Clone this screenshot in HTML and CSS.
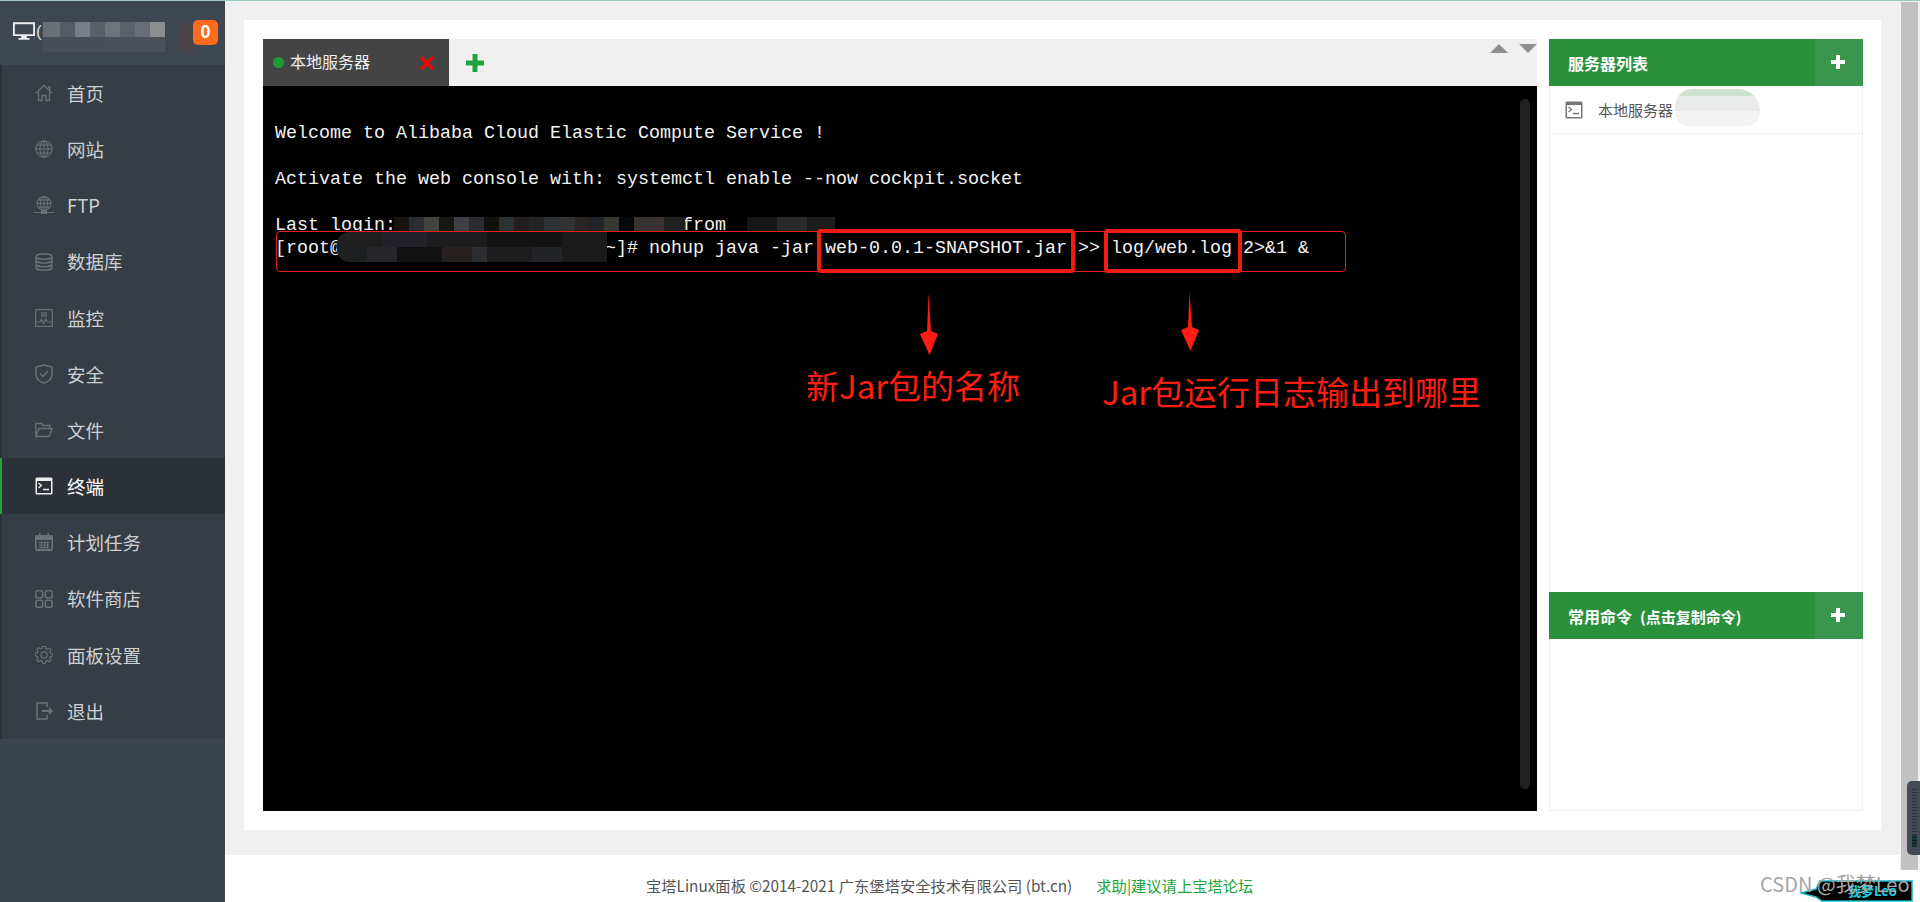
FILE: index.html
```html
<!DOCTYPE html>
<html lang="zh-CN">
<head>
<meta charset="utf-8">
<title>宝塔Linux面板 - 终端</title>
<link rel="stylesheet" href="styles.css">
</head>
<body>
<div class="topline"></div>
<div class="app">
  <aside class="sidebar">
    <div class="brand">
      <svg class="brand-icon" viewBox="0 0 24 20"><path d="M1 1h22v13H1z" fill="none" stroke="#eee" stroke-width="2"/><path d="M9 15h6v2h3v2H6v-2h3z" fill="#eee"/></svg>
      <span class="brand-paren">(</span>
      <div class="brand-mosaic"></div>
      <div class="brand-smear"></div>
      <span class="badge">0</span>
    </div>
    <nav class="menu">
      <a class="item"><svg class="ico" viewBox="0 0 18 18"><path d="M1 9 9 1.500 17 9M3.500 8v8.500h3.500v-5h4v5h3.500V8M13 3h2v3" fill="none" stroke="currentColor" stroke-width="1.300"/></svg><span>首页</span></a>
      <a class="item"><svg class="ico" viewBox="0 0 18 18"><g fill="none" stroke="currentColor" stroke-width="1.100"><circle cx="9" cy="9" r="8.200"/><ellipse cx="9" cy="9" rx="4" ry="8.200"/><path d="M9 1v16M1 9h16M2 5h14M2 13h14"/></g></svg><span>网站</span></a>
      <a class="item"><svg class="ico ico-wide" viewBox="0 0 20 18"><g fill="none" stroke="currentColor" stroke-width="1.100"><circle cx="10" cy="7.500" r="7"/><ellipse cx="10" cy="7.500" rx="3.500" ry="7"/><path d="M10 .5v14M3 7.500h14M4 4h12M4 11h12"/></g><path d="M0 16h7v-1h6v1h7v1h-7v1H7v-1H0z" fill="currentColor"/></svg><span>FTP</span></a>
      <a class="item"><svg class="ico" viewBox="0 0 18 18"><g fill="none" stroke="currentColor" stroke-width="1.400"><ellipse cx="9" cy="3.500" rx="8" ry="2.800"/><path d="M1 3.500v11c0 1.500 3.500 2.800 8 2.800s8-1.300 8-2.800v-11M1 7.200c0 1.500 3.500 2.800 8 2.800s8-1.300 8-2.800M1 11c0 1.500 3.500 2.800 8 2.800s8-1.300 8-2.800"/></g></svg><span>数据库</span></a>
      <a class="item"><svg class="ico" viewBox="0 0 18 18"><g fill="none" stroke="currentColor" stroke-width="1.200"><path d="M.7.7h16.600v16.600H.7z"/><path d="M1 13h4l1.500-3 2 4.500L11 10l1 3h5"/></g><path d="M6 3h6v5H6z" fill="currentColor" opacity=".6"/></svg><span>监控</span></a>
      <a class="item"><svg class="ico ico-tall" viewBox="0 0 18 20"><path d="M9 1 1 3v8c0 4 4 7 8 8 4-1 8-4 8-8V3z" fill="none" stroke="currentColor" stroke-width="1.500"/><path d="m5 9.500 3 3 5-5.500" fill="none" stroke="currentColor" stroke-width="1.500"/></svg><span>安全</span></a>
      <a class="item"><svg class="ico" viewBox="0 0 18 18"><path d="M.8 15.500V2.500h5.500l1.500 2h7v3M.8 15.500 4 7.500h13.200l-3 8z" fill="none" stroke="currentColor" stroke-width="1.300"/></svg><span>文件</span></a>
      <a class="item active"><svg class="ico" viewBox="0 0 18 18"><path d="M2 .5h14A1.500 1.500 0 0 1 17.500 2v14a1.500 1.500 0 0 1-1.500 1.500H2A1.500 1.500 0 0 1 .5 16V2A1.500 1.500 0 0 1 2 .5zM2 4v12h14V4z" fill="currentColor" fill-rule="evenodd"/><path d="m3.500 6 3 2.500-3 2.500M8 12.500h6" fill="none" stroke="currentColor" stroke-width="1.300"/></svg><span>终端</span></a>
      <a class="item"><svg class="ico" viewBox="0 0 18 18"><path d="M2 2h14a2 2 0 0 1 2 2v12a2 2 0 0 1-2 2H2a2 2 0 0 1-2-2V4a2 2 0 0 1 2-2zm-.5 5v9h15V7z" fill="currentColor" fill-rule="evenodd"/><path d="M4 0h1.500v3H4zM12.500 0H14v3h-1.500zM3.500 9h11v1h-11zM3.500 11.500h11v1h-11zM3.500 14h11v1h-11zM6 8.500h1v7H6zM9 8.500h1v7H9zM12 8.500h1v7h-1z" fill="currentColor"/></svg><span>计划任务</span></a>
      <a class="item"><svg class="ico" viewBox="0 0 18 18"><g fill="none" stroke="currentColor" stroke-width="1.500"><rect x=".8" y=".8" width="6.900" height="6.900" rx="1.800"/><rect x="10.300" y=".8" width="6.900" height="6.900" rx="1.800"/><rect x=".8" y="10.300" width="6.900" height="6.900" rx="1.800"/><rect x="10.300" y="10.300" width="6.900" height="6.900" rx="1.800"/></g></svg><span>软件商店</span></a>
      <a class="item"><svg class="ico" viewBox="0 0 18 18"><g fill="none" stroke="currentColor" stroke-width="1.200"><path d="M7.600.8h2.900l.5 2.200 1.700.7 2-1.200 1.600 1.700-1.200 1.900.7 1.700 2.200.6v2.200l-2.200.5-.7 1.700 1.200 1.900-1.600 1.600-2-1.200-1.700.7-.5 2.100H7.600l-.5-2.100-1.700-.7-2 1.200-1.600-1.600 1.200-1.900-.7-1.700L.1 10.100V7.900l2.200-.6.7-1.700L1.800 3.700 3.400 2l2 1.200 1.700-.7z" transform="translate(0 -.3) scale(.98)"/><circle cx="9" cy="9" r="3.200"/></g></svg><span>面板设置</span></a>
      <a class="item"><svg class="ico" viewBox="0 0 18 18"><path d="M12 5V1H2v16h10v-4" fill="none" stroke="currentColor" stroke-width="1.500"/><path d="M7 8h7V5l4 4-4 4v-3H7z" fill="currentColor"/></svg><span>退出</span></a>
    </nav>
  </aside>

  <main class="main">
    <div class="content">
      <section class="panel">
        <div class="term-col">
          <div class="tabbar">
            <div class="tab">
              <i class="dot"></i><span class="tab-name">本地服务器</span>
              <svg class="tab-x" viewBox="0 0 16 16"><path d="M2 2l12 12M14 2 2 14" stroke="#f00" stroke-width="3"/></svg>
            </div>
            <svg class="tab-add" viewBox="0 0 18 18"><path d="M6.500 0h5v6.500H18v5h-6.500V18h-5v-6.500H0v-5h6.500z" fill="#1fa33c"/></svg>
            <div class="tab-arrows">
              <i class="arrow-up"></i><i class="arrow-down"></i>
            </div>
          </div>
          <div class="terminal">
<pre class="term-text">Welcome to Alibaba Cloud Elastic Compute Service !

Activate the web console with: systemctl enable --now cockpit.socket

Last login:                          from
[root@                        ~]# nohup java -jar web-0.0.1-SNAPSHOT.jar &gt;&gt; log/web.log 2&gt;&amp;1 &amp;</pre>
            <div class="term-scroll"></div>
            <div class="mosaic m-login"></div>
            <div class="mosaic m-from"></div>
            <div class="mosaic m-host"></div>
            <div class="mark mark-line"></div>
            <div class="mark mark-jar"></div>
            <div class="mark mark-log"></div>
            <svg class="pointer p-jar" viewBox="0 0 18 62"><path d="M8.500 0 11 38 18 41 9.500 62 0 41 7 38z" fill="#ff1c10"/></svg>
            <svg class="pointer p-log" viewBox="0 0 18 60"><path d="M8.500 0 11 36 18 39 9.500 60 0 39 7 36z" fill="#ff1c10"/></svg>
            <div class="note note-jar">新Jar包的名称</div>
            <div class="note note-log">Jar包运行日志输出到哪里</div>
          </div>
        </div>
        <div class="side-col">
          <div class="side-head">
            <h3>服务器列表</h3>
            <button class="side-add"><svg viewBox="0 0 14 14"><path d="M5 0h4v5h5v4H9v5H5V9H0V5h5z" fill="#fff"/></svg></button>
          </div>
          <div class="server-list">
            <div class="server">
              <svg class="server-ico" viewBox="0 0 18 18"><path d="M2 .5h14A1.500 1.500 0 0 1 17.500 2v14a1.500 1.500 0 0 1-1.500 1.500H2A1.500 1.500 0 0 1 .5 16V2A1.500 1.500 0 0 1 2 .5zM2 4v12h14V4z" fill="#777" fill-rule="evenodd"/><path d="m3.500 6 3 2.500-3 2.500M8 12.500h6" fill="none" stroke="#777" stroke-width="1.300"/></svg>
              <span>本地服务器</span>
              <div class="server-blur"></div>
            </div>
          </div>
          <div class="side-head">
            <h3>常用命令<small>(点击复制命令)</small></h3>
            <button class="side-add"><svg viewBox="0 0 14 14"><path d="M5 0h4v5h5v4H9v5H5V9H0V5h5z" fill="#fff"/></svg></button>
          </div>
          <div class="cmd-list"></div>
        </div>
      </section>
      <footer class="footer">
        <span>宝塔Linux面板 ©2014-2021 广东堡塔安全技术有限公司 (bt.cn)</span>
        <a class="footer-link">求助|建议请上宝塔论坛</a>
      </footer>
    </div>
    <div class="scrollbar"><div class="scroll-thumb"></div></div>
  </main>
</div>
<div class="widget"><i></i></div>
<svg class="stamp" viewBox="0 0 113 22"><path d="M1 13 16 9 20 1H112V21H22L16 17z" fill="#000" stroke="#17b4c8" stroke-width="1.500"/><text x="48" y="16" class="stamp-text">我梦Leo</text></svg>
<div class="watermark">CSDN @我梦Leo</div>
</body>
</html>
```
FILE: styles.css
```css
* { box-sizing: border-box; margin: 0; padding: 0; }
html, body { height: 902px; overflow: hidden; }
body {
  background: #fff;
  font-family: "Liberation Sans", "Noto Sans CJK SC", sans-serif;
  display: flex;
  flex-direction: column;
  position: relative;
}
.topline { height: 1px; background: #9cc8c6; flex: none; }
.app { flex: 1; display: flex; min-height: 0; }

/* sidebar */
.sidebar { width: 225px; flex: none; background: #3c444d; display: flex; flex-direction: column; }
.brand { height: 64px; flex: none; position: relative; display: flex; align-items: center; padding-left: 13px; background: #3e4650; }
.brand-icon { width: 22px; height: 19px; margin-top: -3px; }
.brand-paren { color: #ddd; font-size: 17px; margin-left: 1px; margin-top: -3px; }
.brand-mosaic {
  position: absolute; left: 43px; top: 21px; width: 122px; height: 30px;
  background:
    linear-gradient(90deg, #6c7175 0 17px, #565c63 17px 32px, #7a7f87 32px 47px, #5a6068 47px 62px, #70757c 62px 77px, #5b6169 77px 92px, #696e76 92px 107px, #8b8d8f 107px) top/100% 15px no-repeat,
    linear-gradient(90deg, #474e56 0 32px, #484f58 32px 62px, #4a515a 62px 92px, #4b5159 92px) bottom/100% 15px no-repeat;
}
.brand-smear { position: absolute; left: 180px; top: 21px; width: 15px; height: 30px; background: #4a4347; border-radius: 8px 8px 0 0; }
.badge {
  position: absolute; left: 193px; top: 19px; width: 25px; height: 25px;
  background: #ff6a1e; border-radius: 5px; color: #fff; font-weight: 700; font-size: 18px;
  display: flex; align-items: center; justify-content: center;
}
.menu { height: 674px; flex: none; display: flex; flex-direction: column; background: #363d44; border-left: 2px solid #2c3138; }
.item {
  flex: 1; display: flex; align-items: center; padding-left: 33px; gap: 14px;
  color: #6b7177; font-size: 18.500px;
}
.item span { color: #ccd0d3; font-family: "Noto Sans CJK SC", sans-serif; line-height: 1; }
.ico { width: 18px; height: 18px; flex: none; }
.ico-wide { width: 20px; margin-left: -1px; margin-right: -1px; }
.ico-tall { height: 20px; }
.item.active { background: #2c3138; color: #eee; margin-left: -2px; border-left: 2px solid #20a53a; }
.item.active span { color: #fff; }

/* main */
.main { flex: 1; display: flex; min-width: 0; }
.content { flex: 1; display: flex; flex-direction: column; padding-top: 19px; min-width: 0; background: #f0f0f0; }
.panel {
  height: 810px; flex: none; margin: 0 19px; background: #fff;
  padding: 19px 18px 19px 19px; display: flex; gap: 12px;
}
.term-col { width: 1274px; flex: none; display: flex; flex-direction: column; }
.tabbar { height: 47px; flex: none; background: #f0f0f0; display: flex; align-items: center; }
.tab { width: 186px; height: 47px; flex: none; background: #444; display: flex; align-items: center; padding-left: 10px; color: #eee; font-size: 16px; }
.dot { width: 11px; height: 11px; border-radius: 50%; background: #1c9c36; margin-right: 6px; flex: none; }
.tab-name { font-family: "Noto Sans CJK SC", sans-serif; white-space: nowrap; flex: none; margin-top: -3px; }
.tab-x { width: 16px; height: 16px; margin-left: 49px; flex: none; }
.tab-add { width: 18px; height: 18px; margin-left: 17px; }
.tab-arrows { margin-left: auto; align-self: flex-start; display: flex; gap: 11px; padding-top: 5px; }
.arrow-up { border-left: 9px solid transparent; border-right: 9px solid transparent; border-bottom: 9px solid #8f8f8f; }
.arrow-down { border-left: 9px solid transparent; border-right: 9px solid transparent; border-top: 9px solid #8f8f8f; }
.terminal { flex: 1; background: #000; position: relative; overflow: hidden; padding: 36px 0 0 12px; }
.term-text { font-family: "Liberation Mono", monospace; font-size: 18.330px; line-height: 23px; color: #f2f2f2; }
.term-scroll { position: absolute; right: 7px; top: 13px; bottom: 22px; width: 10px; background: #222; border-radius: 5px; }
.mosaic { position: absolute; }
.m-login {
  left: 131px; top: 131px; width: 291px; height: 14px;
  background: linear-gradient(90deg, #17140f 0 15px, #2c2c35 15px 30px, #45433d 30px 45px, #171712 45px 60px, #3e3f46 60px 75px, #2c2c30 75px 90px, #11100d 90px 105px, #2b3032 105px 120px, #231e1d 120px 135px, #212423 135px 150px, #2b3033 150px 165px, #323231 165px 180px, #2a2624 180px 195px, #212529 195px 210px, #383730 210px 225px, #05090b 225px 240px, #393431 240px 270px, #212120 270px);
}
.m-from {
  left: 484px; top: 131px; width: 88px; height: 14px;
  background: linear-gradient(90deg, #161616 0 30px, #2a2a2a 30px 60px, #1c1c1c 60px);
}
.m-host {
  left: 74px; top: 146px; width: 270px; height: 30px; border-radius: 12px 0 0 12px;
  background:
    linear-gradient(90deg, #201e1e 0 45px, #22212a 45px 90px, #1c1c1e 90px 150px, #141414 150px 225px, #1b1b1b 225px) top/100% 15px no-repeat,
    linear-gradient(90deg, #1d2020 0 30px, #26252a 30px 60px, #111 60px 105px, #26201f 105px 135px, #2c2d31 135px 150px, #1d1d1d 150px 195px, #212327 195px 225px, #1a1a1a 225px) bottom/100% 15px no-repeat;
}
.mark { position: absolute; border: 1px solid #f22; border-radius: 4px; }
.mark-line { left: 13px; top: 145px; width: 1070px; height: 41px; border-color: #e3201b; }
.mark-jar { left: 554px; top: 143px; width: 258px; height: 44px; border: 4px solid #f01c14; }
.mark-log { left: 841px; top: 143px; width: 138px; height: 44px; border: 4px solid #f01c14; }
.pointer { position: absolute; width: 18px; }
.p-jar { left: 657px; top: 207px; height: 62px; }
.p-log { left: 918px; top: 205px; height: 60px; }
.note { position: absolute; color: #ff1c10; font-size: 33px; line-height: 1.2; font-family: "Noto Sans CJK SC", sans-serif; font-weight: 400; white-space: nowrap; }
.note-jar { left: 543px; top: 280px; }
.note-log { left: 839px; top: 286px; }

/* right column */
.side-col { flex: 1; display: flex; flex-direction: column; }
.side-head { height: 47px; flex: none; background: #2a903c; display: flex; align-items: center; justify-content: space-between; padding-left: 19px; color: #fff; }
.side-head h3 { font-size: 16px; font-weight: 700; font-family: "Noto Sans CJK SC", sans-serif; }
.side-head small { font-size: 15px; margin-left: 8px; font-weight: 700; }
.side-add { width: 48px; height: 47px; border: 0; background: #3a964c; display: flex; align-items: center; justify-content: center; padding: 0 2px 2px 0; }
.side-add svg { width: 14px; height: 14px; }
.server-list { height: 506px; flex: none; border: 1px solid #eee; border-top: 0; border-bottom: 0; }
.server { height: 48px; border-bottom: 1px solid #eee; display: flex; align-items: center; padding-left: 15px; position: relative; font-size: 15px; color: #555; font-family: "Noto Sans CJK SC", sans-serif; gap: 15px; }
.server-ico { width: 18px; height: 18px; flex: none; }
.server-blur {
  position: absolute; left: 125px; top: 3px; width: 85px; height: 37px; border-radius: 18px 22px 14px 14px;
  background: linear-gradient(#cbe3d0 0 7px, #e9eaea 7px 22px, #f2f2f2 22px);
}
.cmd-list { flex: 1; border: 1px solid #eee; border-top: 0; }

/* footer */
.footer {
  margin-top: 25px; margin-right: -1px; flex: 1; background: #fff; font-size: 15.300px; color: #555;
  display: flex; gap: 24px; padding: 20px 0 0 421px; font-family: "Noto Sans CJK SC", sans-serif; line-height: 20px;
}
.footer-link { color: #20a53a; }

/* page scrollbar */
.scrollbar { width: 20px; height: 869px; flex: none; background: #f1f1f1; padding: 1px 2px 0 1px; }
.scroll-thumb { height: 868px; background: #c1c1c1; }

/* overlays */
.widget { position: absolute; right: 0; top: 781px; width: 13px; height: 74px; background: #454a57; border-radius: 5px 0 0 5px; padding: 8px 3px 0 5px; }
.widget i { display: block; height: 58px; background: linear-gradient(transparent 46px, #55c98f 46px), repeating-linear-gradient(#2d3140 0 1px, #454a57 1px 3px); background-blend-mode: multiply; }
.stamp { position: absolute; left: 1800px; top: 880px; width: 113px; height: 22px; }
.stamp-text { fill: #19d4e8; font-size: 13px; font-weight: 700; font-family: "Noto Sans CJK SC", sans-serif; }
.watermark { position: absolute; left: 1760px; top: 872px; font-size: 20px; color: #a6a6a6; font-family: "Noto Sans CJK SC", sans-serif; line-height: 24px; white-space: nowrap; }
```
